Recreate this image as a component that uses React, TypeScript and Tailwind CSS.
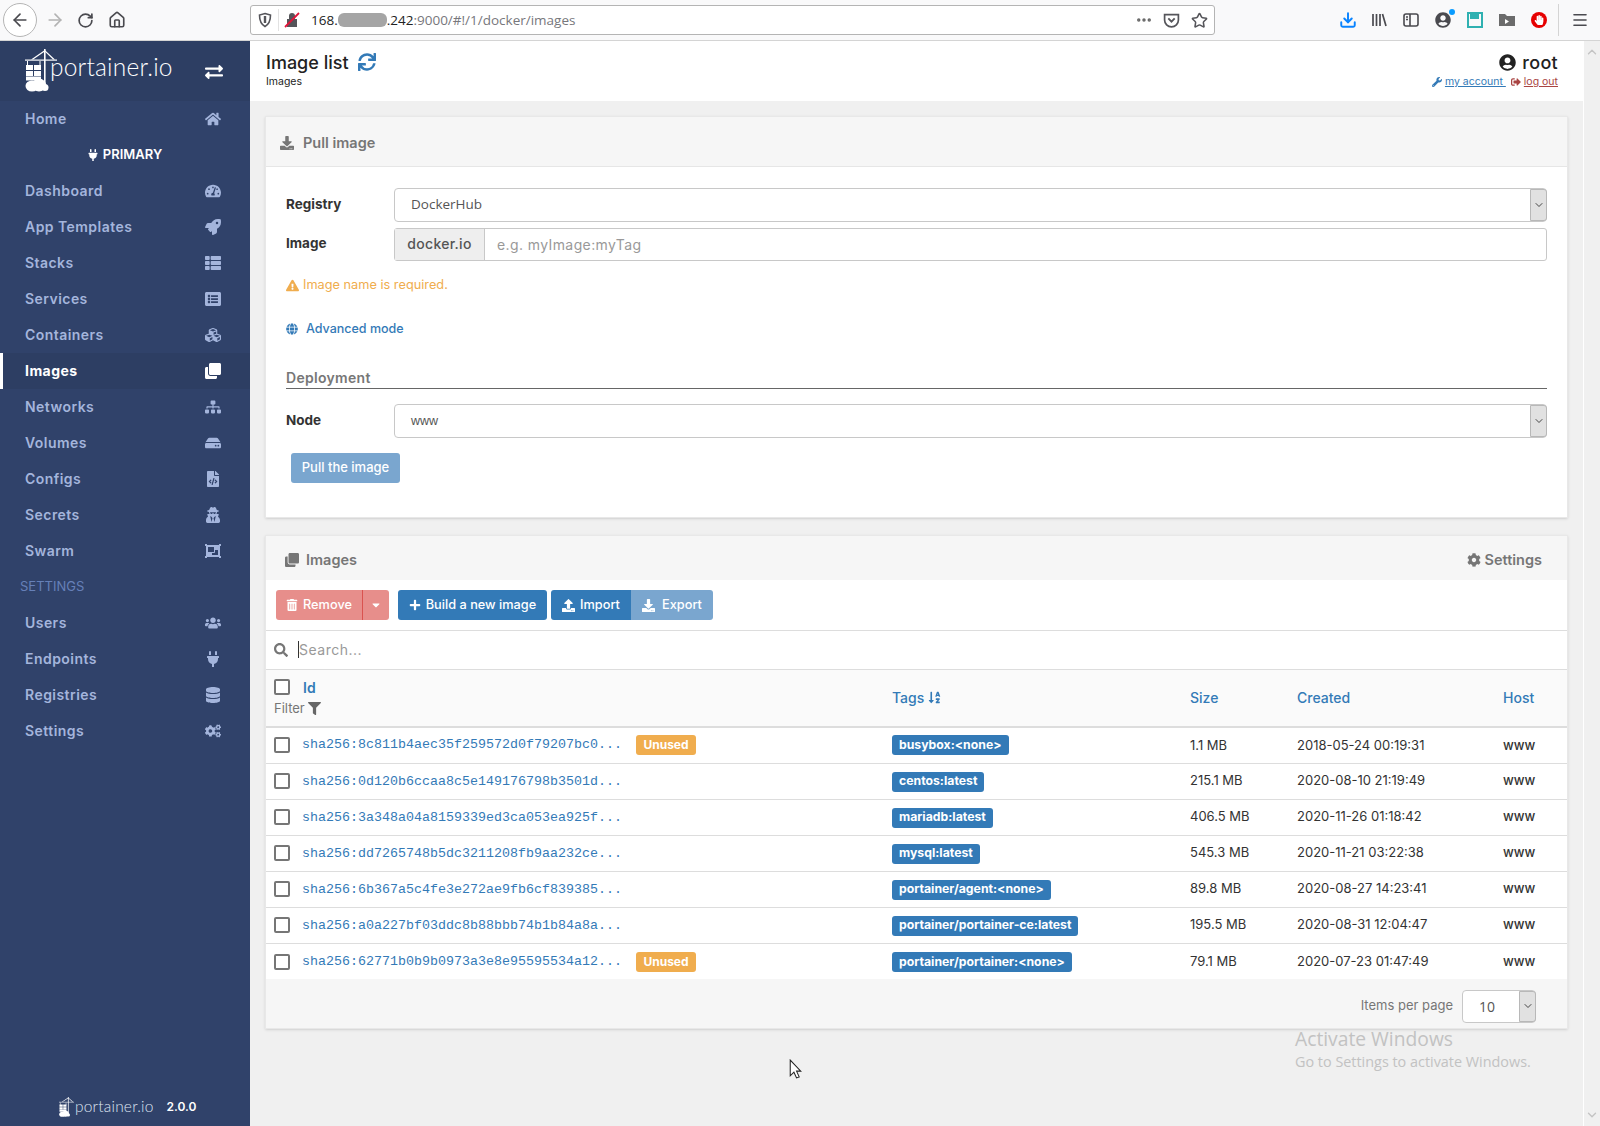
import React from "react";
import {
  FaHome, FaPlug, FaTachometerAlt, FaRocket, FaThList, FaListAlt, FaCubes, FaClone, FaSitemap, FaHdd,
  FaFileCode, FaUserSecret, FaObjectGroup, FaUsers, FaDatabase, FaCogs, FaExchangeAlt, FaSync, FaDownload,
  FaUserCircle, FaWrench, FaSignOutAlt, FaExclamationTriangle, FaGlobe, FaTrashAlt, FaCaretDown, FaPlus,
  FaUpload, FaSearch, FaFilter, FaSortAlphaDown, FaCog, FaHandPaper,
} from "react-icons/fa";
import { ArrowLeft, ArrowRight, RotateCw, Home, Star, MoreHorizontal, ChevronDown, ChevronUp, Menu, Download } from "lucide-react";

const nav1 = [
  ["Dashboard", FaTachometerAlt],
  ["App Templates", FaRocket],
  ["Stacks", FaThList],
  ["Services", FaListAlt],
  ["Containers", FaCubes],
  ["Images", FaClone],
  ["Networks", FaSitemap],
  ["Volumes", FaHdd],
  ["Configs", FaFileCode],
  ["Secrets", FaUserSecret],
  ["Swarm", FaObjectGroup],
] as const;
const nav2 = [
  ["Users", FaUsers],
  ["Endpoints", FaPlug],
  ["Registries", FaDatabase],
  ["Settings", FaCogs],
] as const;

const rows = [
  ["sha256:8c811b4aec35f259572d0f79207bc0...", true, "busybox:<none>", "1.1 MB", "2018-05-24 00:19:31"],
  ["sha256:0d120b6ccaa8c5e149176798b3501d...", false, "centos:latest", "215.1 MB", "2020-08-10 21:19:49"],
  ["sha256:3a348a04a8159339ed3ca053ea925f...", false, "mariadb:latest", "406.5 MB", "2020-11-26 01:18:42"],
  ["sha256:dd7265748b5dc3211208fb9aa232ce...", false, "mysql:latest", "545.3 MB", "2020-11-21 03:22:38"],
  ["sha256:6b367a5c4fe3e272ae9fb6cf839385...", false, "portainer/agent:<none>", "89.8 MB", "2020-08-27 14:23:41"],
  ["sha256:a0a227bf03ddc8b88bbb74b1b84a8a...", false, "portainer/portainer-ce:latest", "195.5 MB", "2020-08-31 12:04:47"],
  ["sha256:62771b0b9b0973a3e8e95595534a12...", true, "portainer/portainer:<none>", "79.1 MB", "2020-07-23 01:47:49"],
] as const;

function Logo({ className }: { className: string }) {
  return (
    <svg viewBox="0 0 32 43" className={className} fill="#fff">
      <path d="M19 0h1.6v36H19z" />
      <path d="M0 10.5h32v1.2H0z" />
      <path d="M19.8 1 6 10.5h2.2L19.8 2.6 28 10.5h2L19.8 1z" />
      <path d="M2 12h1v5H2zM14.5 12h1v5h-1z" />
      <path d="M1 16h7v5H1zM9 16h7v5H9zM1 22h7v5H1zM9 22h7v5H9zM1 27.5h15v4H1z" />
      <ellipse cx="7" cy="37" rx="6.5" ry="5.5" />
      <ellipse cx="14" cy="36" rx="7" ry="6.5" />
      <ellipse cx="20" cy="38.5" rx="3.5" ry="3.5" />
    </svg>
  );
}

function NavRow({ label, Icon, active }: { label: string; Icon: React.ComponentType<{ className?: string }>; active?: boolean }) {
  return (
    <div className={`h-9 flex items-center justify-between pl-[25px] pr-[28px] border-l-[3px] ${active ? "border-white bg-[#2d3e63] text-white font-bold" : "border-transparent text-[#a4b5dc] font-semibold"}`}>
      <span className="-ml-[3px] pb-[2px] text-[14px] tracking-[0.45px]">{label}</span>
      <span className="w-[18px] flex justify-center"><Icon className="text-[16px]" /></span>
    </div>
  );
}

function Sidebar() {
  return (
    <aside className="w-[250px] shrink-0 bg-[#30426a] flex flex-col">
      <div className="h-[60px] bg-[#2d3e63] flex items-center pl-[25px] pr-[27px] shrink-0">
        <Logo className="w-[32px] h-[43px] -mt-[1px]" />
        <span className="-ml-[7px] -mt-[8px] text-white text-[24.5px] font-light [font-family:Lato,sans-serif] tracking-[0.2px]">portainer.io</span>
        <FaExchangeAlt className="ml-auto text-white text-[18px] mt-[1px]" />
      </div>
      <NavRow label="Home" Icon={FaHome} />
      <div className="h-9 flex items-center justify-center gap-1 text-white text-[13px] font-semibold pr-[1px]">
        <FaPlug className="text-[12px]" />
        <span>PRIMARY</span>
      </div>
      {nav1.map(([l, I]) => <NavRow key={l} label={l} Icon={I} active={l === "Images"} />)}
      <div className="h-9 flex items-center pl-5 text-[#6680b8] text-[13px]">SETTINGS</div>
      {nav2.map(([l, I]) => <NavRow key={l} label={l} Icon={I} />)}
      <div className="mt-auto h-[44px] mb-[2px] pt-[10px] flex items-center pl-[59px]">
        <Logo className="w-[15px] h-[28px]" />
        <span className="ml-[1px] text-[#dfe5f2] text-[15.5px] [font-family:Lato,sans-serif] font-light tracking-[0.2px]">portainer.io</span>
        <span className="ml-[13px] text-white text-[12px] font-semibold">2.0.0</span>
      </div>
    </aside>
  );
}

function BrowserBar() {
  return (
    <div className="h-[41px] shrink-0 bg-[#f9f9fa] border-b border-[#d4d4d4] flex items-center text-[#4a4a4f] relative">
      <div className="ml-[3px] w-[34px] h-[34px] rounded-full border border-[#b5b5b5] bg-white flex items-center justify-center">
        <ArrowLeft size={20} strokeWidth={2} />
      </div>
      <ArrowRight size={20} strokeWidth={2} className="ml-[8px] text-[#b3b3b3]" />
      <RotateCw size={17} strokeWidth={2.4} className="ml-[12px]" />
      <Home size={18} strokeWidth={2.2} className="ml-[14px]" />
      <div className="ml-[124px] w-[965px] h-[30px] bg-white border border-[#b4b4b4] rounded-[3px] flex items-center [font-family:'Open_Sans',sans-serif] text-[13.5px]">
        <svg viewBox="0 0 16 16" className="ml-[6px] w-[16px] h-[16px]" fill="none" stroke="#55555a" strokeWidth="1.6"><path d="M8 1.5l5.5 1.5c0 5-1 9-5.5 11.5C3.5 12 2.5 8 2.5 3z" /><path d="M8 4v7" strokeWidth="2.4" /></svg>
        <div className="ml-[5px] w-px h-[22px] bg-[#e2e2e2]" />
        <svg viewBox="0 0 16 16" className="ml-[5px] w-[16px] h-[16px]"><path d="M3 7h10v8H3zM5 7V4a3 3 0 016 0v3" fill="#55555a" /><path d="M1 15L15 1" stroke="#e0163a" strokeWidth="1.8" /></svg>
        <span className="ml-[11px] text-[#222]">168.</span>
        <span className="inline-block w-[49px] h-[14px] rounded-[6px] bg-[#a5a5a5]" />
        <span className="text-[#222]">.242</span>
        <span className="text-[#77777c]">:9000/#!/1/docker/images</span>
        <MoreHorizontal size={18} strokeWidth={2.6} className="ml-auto text-[#666]" />
        <svg viewBox="0 0 16 16" className="ml-[10px] w-[17px] h-[17px]" fill="none" stroke="#55555a" strokeWidth="1.6"><path d="M1.5 2.5h13v5a6.5 6.5 0 01-13 0z" /><path d="M5 6l3 3 3-3" strokeWidth="1.8" /></svg>
        <Star size={17} strokeWidth={2.2} className="ml-[11px] mr-[6px] text-[#55555a]" />
      </div>
      <Download size={18} strokeWidth={2.6} className="ml-[124px] text-[#0a84ff]" />
      <svg viewBox="0 0 16 16" className="ml-[14px] w-[16px] h-[16px]" fill="none" stroke="#4a4a4f" strokeWidth="1.7"><path d="M2 2v12M5.5 2v12M9 2v12M11.5 2l3.5 12" /></svg>
      <svg viewBox="0 0 16 16" className="ml-[16px] w-[16px] h-[16px]" fill="none" stroke="#4a4a4f" strokeWidth="1.6"><rect x="1" y="2" width="14" height="12" rx="2" /><path d="M7 2v12M3 5h2M3 7.5h2" /></svg>
      <div className="ml-[16px] relative w-[16px] h-[16px]">
        <FaUserCircle className="text-[16px] text-[#4a4a4f]" />
        <span className="absolute -top-[3px] -right-[4px] w-[6px] h-[6px] rounded-full bg-[#0a9cff]" />
      </div>
      <svg viewBox="0 0 16 16" className="ml-[16px] w-[16px] h-[16px]" fill="none" stroke="#2fb1b1" strokeWidth="2"><path d="M1 1h14v14H1z" /><path d="M4 1v5h7V1" fill="#2fb1b1" /></svg>
      <svg viewBox="0 0 16 16" className="ml-[16px] w-[16px] h-[16px]" fill="#6b6b6b"><path d="M0 2h6l2 2h8v10H0z" /><path d="M6 7l4 2.5L6 12z" fill="#fff" /></svg>
      <div className="ml-[16px] w-[16px] h-[16px] rounded-full bg-[#e60000] flex items-center justify-center">
        <FaHandPaper className="text-white text-[10px]" />
      </div>
      <div className="ml-[11px] w-px h-[32px] bg-[#d4d4d4]" />
      <Menu size={18} strokeWidth={2.2} className="ml-[12px]" />
    </div>
  );
}

function Arrow() {
  return (
    <div className="w-[17px] h-full bg-[#e1e1e1] border border-[#b8b8b8] rounded-r-[3px] flex items-center justify-center shrink-0 -mr-px">
      <ChevronDown size={12} strokeWidth={1.8} className="text-[#333]" />
    </div>
  );
}

function Box() {
  return <span className="block w-[16px] h-[16px] border-2 border-[#767676] rounded-[2px] bg-white" />;
}

function PullCard() {
  return (
    <section className="bg-white border border-[#e8e8e8] shadow-sm">
      <div className="h-[50px] pt-[2px] bg-[#f6f6f6] border-b border-[#e6e6e6] flex items-center pl-[14px] text-[#767676] text-[14.5px] font-semibold">
        <FaDownload className="text-[14px]" />
        <span className="ml-[9px]">Pull image</span>
      </div>
      <div className="pl-[20px] pr-[20px] pb-[34px]">
        <div className="mt-[21px] h-[34px] flex items-center">
          <label className="w-[108px] pb-[2px] text-[13.5px] font-bold text-[#333]">Registry</label>
          <div className="flex-1 h-full border border-[#c8c8c8] rounded-[4px] flex items-center justify-between pl-[16px] text-[13.5px] text-[#555] [font-family:'Open_Sans',sans-serif]">
            <span className="pb-[2px]">DockerHub</span><Arrow />
          </div>
        </div>
        <div className="mt-[6px] h-[33px] flex items-center">
          <label className="w-[108px] pb-[2px] text-[13.5px] font-bold text-[#333]">Image</label>
          <div className="flex-1 h-full border border-[#c8c8c8] rounded-[3px] flex items-center text-[14px]">
            <span className="w-[90px] h-full pb-[2px] bg-[#eeeeee] border-r border-[#c8c8c8] flex items-center justify-center text-[#555] font-medium tracking-[0.3px]">docker.io</span>
            <span className="pl-[12px] text-[#999] tracking-[0.4px]">e.g. myImage:myTag</span>
          </div>
        </div>
        <div className="mt-[14px] h-5 flex items-center text-[#f0ad4e] text-[12.75px]">
          <FaExclamationTriangle className="text-[13px] mr-[4px]" />Image name is required.
        </div>
        <div className="mt-[24px] h-5 flex items-center text-[#337ab7] text-[12.5px] font-medium">
          <FaGlobe className="text-[12px] mr-[8px]" />Advanced mode
        </div>
        <div className="mt-[29px] h-[21px] border-b border-[#666] text-[#777] text-[14px] leading-[20px] font-semibold tracking-[0.3px]">Deployment</div>
        <div className="mt-[15px] h-[34px] flex items-center">
          <label className="w-[108px] pb-[2px] text-[13.5px] font-bold text-[#333]">Node</label>
          <div className="flex-1 h-full border border-[#c8c8c8] rounded-[4px] flex items-center justify-between pl-[16px] text-[12.5px] text-[#555] [font-family:'Liberation_Sans',sans-serif]">
            www<Arrow />
          </div>
        </div>
        <button className="mt-[15px] ml-[5px] block w-[109px] h-[30px] bg-[#7aa6cf] rounded-[3px] text-white text-[13px] font-medium">Pull the image</button>
      </div>
    </section>
  );
}

function ImagesCard() {
  return (
    <section className="mt-[17px] bg-[#f6f6f6] border border-[#e8e8e8] shadow-sm">
      <div className="h-[44px] pt-[3px] flex items-center justify-between pl-[19px] pr-[25px] text-[#767676] text-[14.5px] font-semibold">
        <span className="flex items-center"><FaClone className="text-[14px]" /><span className="ml-[7px]">Images</span></span>
        <span className="flex items-center"><FaCog className="text-[14px]" /><span className="ml-[4px]">Settings</span></span>
      </div>
      <div className="h-[51px] bg-white border-b border-[#ddd] flex items-center pl-[10px] text-white text-[12.75px] font-medium">
        <div className="h-[30px] w-[113px] bg-[#e78e8b] rounded-[3px] flex items-center">
          <span className="w-[87px] h-full border-r border-[#d9534f] flex items-center justify-center gap-[5px]"><FaTrashAlt className="text-[12px]" />Remove</span>
          <span className="flex-1 flex justify-center"><FaCaretDown className="text-[12px]" /></span>
        </div>
        <div className="ml-[9px] h-[30px] w-[149px] bg-[#337ab7] rounded-[3px] flex items-center justify-center gap-[5px]"><FaPlus className="text-[12px]" />Build a new image</div>
        <div className="ml-[4px] h-[30px] w-[80px] bg-[#337ab7] rounded-l-[3px] flex items-center justify-center gap-[5px]"><FaUpload className="text-[13px]" />Import</div>
        <div className="h-[30px] w-[82px] bg-[#7aa6cf] rounded-r-[3px] flex items-center justify-center gap-[7px]"><FaDownload className="text-[13px]" />Export</div>
      </div>
      <div className="h-[39px] pb-[1px] bg-white border-b border-[#ddd] flex items-center pl-[8px]">
        <FaSearch className="text-[14px] text-[#767676]" />
        <span className="ml-[10px] w-px h-[17px] bg-[#333]" />
        <span className="text-[14px] text-[#999] tracking-[0.5px]">Search...</span>
      </div>
      <table className="w-full table-fixed border-collapse text-[13px] text-[#333]">
        <colgroup>
          <col className="w-[618px]" /><col className="w-[298px]" /><col className="w-[107px]" /><col className="w-[206px]" /><col />
        </colgroup>
        <thead>
          <tr className="h-[57px] bg-[#fafafa] border-b-[2px] border-[#ddd] text-[#337ab7] text-[14px] font-medium text-left">
            <th className="pl-[8px] pb-[2px] font-medium">
              <div className="flex items-center pt-[1px]"><Box /><span className="ml-[13px] font-semibold">Id</span></div>
              <div className="flex items-center text-[#767676] text-[13px] font-normal mt-[1px]">Filter<FaFilter className="ml-[3px] text-[13px] text-[#666]" /></div>
            </th>
            <th className="pl-2 pb-[2px] font-medium"><span className="flex items-center gap-[4px]">Tags<FaSortAlphaDown className="text-[13px]" /></span></th>
            <th className="pl-2 pb-[2px] font-medium">Size</th>
            <th className="pl-2 pb-[2px] font-medium">Created</th>
            <th className="pl-2 pb-[2px] font-medium">Host</th>
          </tr>
        </thead>
        <tbody className="bg-white">
          {rows.map((r, i) => (
            <tr key={i} className={`h-9 ${i ? "border-t border-[#ddd]" : ""}`}>
              <td className="pl-[8px]">
                <div className={`flex items-center ${i ? "pt-[1px]" : ""}`}>
                  <Box />
                  <span className="ml-[12px] w-[319px] text-[#337ab7] text-[13.33px] [font-family:'Liberation_Mono',monospace]">{r[0]}</span>
                  {r[1] && <span className="ml-[15px] w-[60px] h-[20px] bg-[#f0ad4e] rounded-[3px] text-white text-[12px] font-bold flex items-center justify-center">Unused</span>}
                </div>
              </td>
              <td className="pl-2"><span className={`inline-flex items-center h-[20px] px-[7px] bg-[#337ab7] rounded-[3px] text-white text-[12.25px] font-bold ${i ? "mt-[1px]" : ""}`}>{r[2]}</span></td>
              <td className="pl-2">{r[3]}</td>
              <td className="pl-2">{r[4]}</td>
              <td className="pl-2 font-medium">www</td>
            </tr>
          ))}
        </tbody>
      </table>
      <div className="h-[49px] pt-[5px] flex items-center justify-end pr-[31px] text-[#767676] text-[13px]">
        <span>Items per page</span>
        <div className="ml-[9px] w-[74px] h-[33px] bg-white border border-[#c8c8c8] rounded-[4px] flex items-center justify-between pl-[16px] text-[14px] text-[#555] [font-family:'Open_Sans',sans-serif]">
          10<Arrow />
        </div>
      </div>
    </section>
  );
}

export default function App() {
  return (
    <div className="w-[1600px] h-[1126px] overflow-hidden flex flex-col relative bg-[#f0f0f0] [font-family:Inter,sans-serif]">
      <BrowserBar />
      <div className="flex-1 flex min-h-0">
        <Sidebar />
        <main className="flex-1 min-w-0">
          <header className="h-[60px] bg-white pl-4 pr-[25px] flex justify-between">
            <div className="pt-[9px]">
              <div className="flex items-center h-[24px] text-[18px] text-[#222] font-medium">Image list<FaSync className="ml-[9px] text-[18px] text-[#337ab7]" /></div>
              <div className="text-[10.5px] text-[#222]">Images</div>
            </div>
            <div className="pt-[9px] flex flex-col items-end">
              <div className="flex items-center h-[24px] text-[18px] text-[#222] font-medium tracking-[0.3px]"><FaUserCircle className="text-[17px] mr-[6px]" />root</div>
              <div className="flex items-center text-[10.5px]">
                <span className="flex items-center text-[#337ab7] underline"><FaWrench className="text-[10px] mr-[3px]" />my account&nbsp;</span>
                <span className="ml-[5px] flex items-center text-[#a94442] underline"><FaSignOutAlt className="text-[10px] mr-[3px]" />log out</span>
              </div>
            </div>
          </header>
          <div className="pt-[15px] pl-[15px] pr-[15px]">
            <PullCard />
            <ImagesCard />
          </div>
        </main>
        <div className="w-[17px] shrink-0 bg-[#f0f0f0] border-l border-white flex flex-col justify-between items-center py-[4px] text-[#c4c4c4]">
          <ChevronUp size={14} strokeWidth={2.4} />
          <ChevronDown size={14} strokeWidth={2.4} />
        </div>
      </div>
      <div className="absolute left-[1295px] top-[1027px] text-[#c2c2c2] [font-family:'Open_Sans',sans-serif] pointer-events-none">
        <div className="text-[19.25px] leading-[24px]">Activate Windows</div>
        <div className="text-[14.4px] leading-[20px] mt-[1px]">Go to Settings to activate Windows.</div>
      </div>
      <svg viewBox="0 0 12 19" className="absolute left-[789px] top-[1059px] w-[13px] h-[20px]" fill="#fff" stroke="#222" strokeWidth="1"><path d="M1 1v15l3.5-3.5 2.5 5.5 2.5-1-2.5-5.5H11z" /></svg>
    </div>
  );
}
